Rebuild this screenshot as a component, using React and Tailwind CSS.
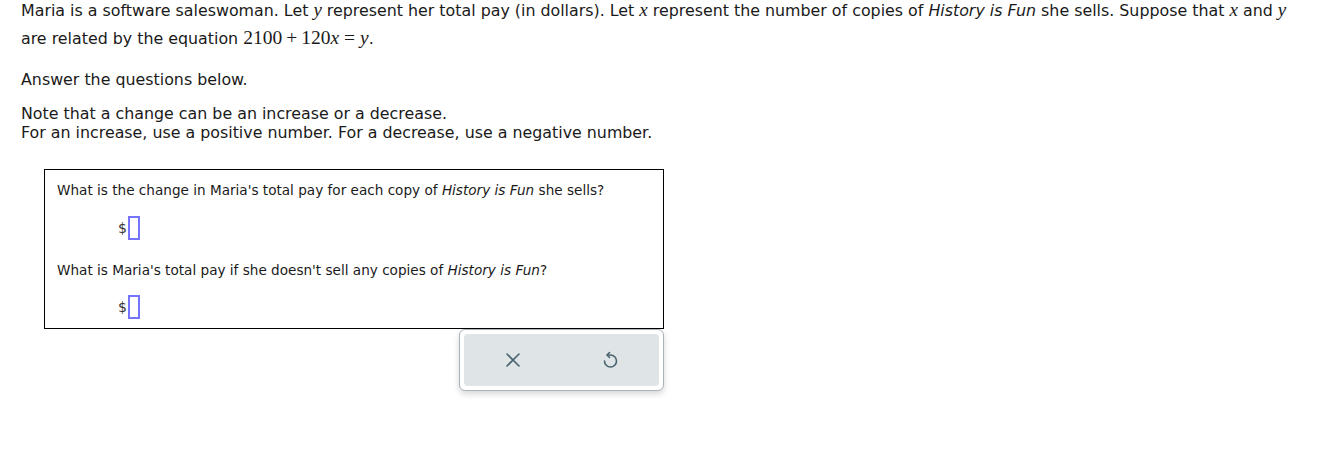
const mathFont = { fontFamily: '"Liberation Serif", "Times New Roman", serif' };

function MathVar({ children }) {
  return (
    <span className="italic text-[19px]" style={mathFont}>
      {children}
    </span>
  );
}

function DollarInput() {
  return (
    <div className="flex items-center pl-[61px] h-[24px]">
      <span className="text-[14px] text-[#333] mr-[1px]" style={{ fontFamily: '"DejaVu Sans", sans-serif' }}>
        $
      </span>
      <div className="w-[12px] h-[24px] border-2 border-[#7474ff] bg-white" />
    </div>
  );
}

function CloseIcon() {
  return (
    <svg width="16" height="16" viewBox="0 0 16 16" fill="none" stroke="#47636f" strokeWidth="1.6" strokeLinecap="round">
      <path d="M2 2 L14 14 M14 2 L2 14" />
    </svg>
  );
}

function UndoIcon() {
  return (
    <svg width="16" height="18" viewBox="0 0 16 18" fill="none" stroke="#47636f" strokeWidth="1.6" strokeLinecap="round" strokeLinejoin="round">
      <path d="M7.5 1.5 L5 4 L7.5 6.5" />
      <path d="M5.5 4 H8.5 A6 6 0 1 1 2.5 10" />
    </svg>
  );
}

export default function App() {
  return (
    <div
      className="bg-white text-[#1a1a1a] w-[1318px] h-[450px] pl-[21px]"
      style={{ fontFamily: '"DejaVu Sans", Verdana, sans-serif' }}
    >
      <p className="w-[1278px] text-[15.85px] leading-[27px] -mt-[4px]">
        Maria is a software saleswoman. Let <MathVar>y</MathVar> represent her total pay (in dollars). Let{" "}
        <MathVar>x</MathVar> represent the number of copies of <i>History is Fun</i> she sells. Suppose that{" "}
        <MathVar>x</MathVar> and <MathVar>y</MathVar> are related by the equation{" "}
        <span className="text-[19.5px]" style={mathFont}>
          2100<span className="mx-[4px]">+</span>120<i>x</i>
          <span className="mx-[5px]">=</span>
          <i>y</i>
        </span>
        .
      </p>

      <p className="text-[15.85px] leading-[19px] mt-[18px]">Answer the questions below.</p>

      <p className="text-[15.85px] leading-[19px] mt-[15px]">
        Note that a change can be an increase or a decrease.
        <br />
        For an increase, use a positive number. For a decrease, use a negative number.
      </p>

      <div className="ml-[23px] mt-[27px] w-[620px] border border-black pt-[11px] pb-[9px] pl-[12px]">
        <p className="text-[13.6px] leading-[18px]">
          What is the change in Maria's total pay for each copy of <i>History is Fun</i> she sells?
        </p>
        <div className="mt-[17px]">
          <DollarInput />
        </div>
        <p className="text-[13.6px] leading-[18px] mt-[21px]">
          What is Maria's total pay if she doesn't sell any copies of <i>History is Fun</i>?
        </p>
        <div className="mt-[16px]">
          <DollarInput />
        </div>
      </div>

      <div className="ml-[438px] w-[205px] h-[62px] rounded-[6px] border border-[#a7b4ba] bg-white p-[4px] shadow-[0_3px_6px_rgba(0,0,0,0.16)]">
        <div className="flex h-full rounded-[4px] bg-[#dfe4e6]">
          <div className="flex-1 flex items-center justify-center">
            <CloseIcon />
          </div>
          <div className="flex-1 flex items-center justify-center">
            <UndoIcon />
          </div>
        </div>
      </div>
    </div>
  );
}
